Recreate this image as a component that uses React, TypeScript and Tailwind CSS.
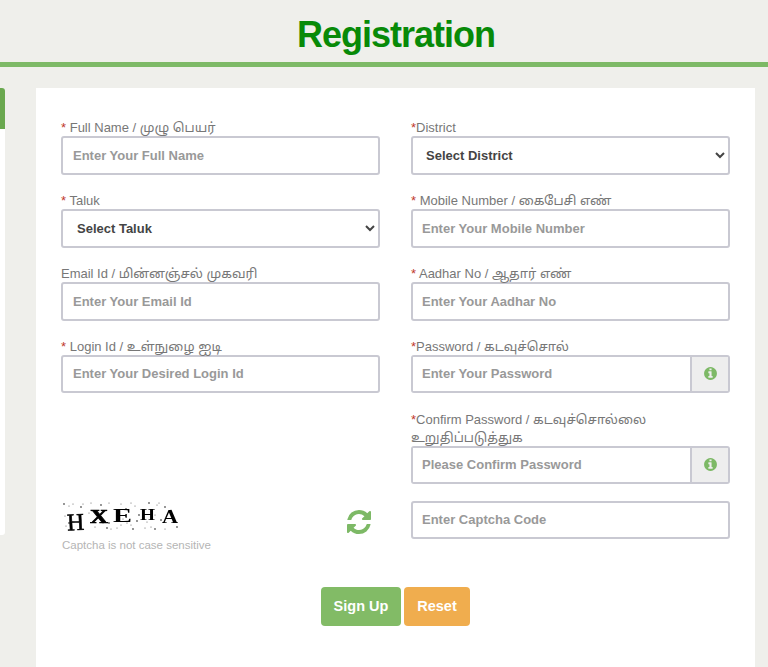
const font = "font-['Liberation_Sans','Noto_Sans_Tamil','Noto_Sans',sans-serif]";

function Label({ star, lead, children }: { star?: boolean; lead?: boolean; children: React.ReactNode }) {
  return (
    <label className="-mb-[1px] block pt-[1px] text-[13px] leading-[18px] text-[#777777]">
      {star && <span className="text-[#c0392b]">*</span>}
      {lead && " "}
      {children}
    </label>
  );
}

function Input({ placeholder, right, short }: { placeholder: string; right?: boolean; short?: boolean }) {
  return (
    <input
      placeholder={placeholder}
      className={`block ${short ? "h-[38px]" : "h-[39px]"} w-full rounded-[3px] border-2 border-[#c9c9d2] bg-white ${right ? "px-[9px]" : "px-[10px]"} pb-[1px] text-[13px] font-bold text-[#555] outline-none placeholder:text-[#999]`}
    />
  );
}

function Select({ label, right }: { label: string; right?: boolean }) {
  return (
    <select
      className={`block h-[39px] w-full rounded-[3px] border-2 border-[#c9c9d2] bg-white ${right ? "px-[9px]" : "px-[10px]"} text-[13px] font-bold text-[#444] outline-none`}
    >
      <option>{label}</option>
    </select>
  );
}

function InfoIcon() {
  return (
    <svg viewBox="0 0 1792 1792" className="h-[15px] w-[15px]" fill="#7db966">
      <path d="M1152 1376v-160q0-14-9-23t-23-9h-96v-512q0-14-9-23t-23-9h-320q-14 0-23 9t-9 23v160q0 14 9 23t23 9h96v320h-96q-14 0-23 9t-9 23v160q0 14 9 23t23 9h448q14 0 23-9t9-23zm-128-896v-160q0-14-9-23t-23-9h-192q-14 0-23 9t-9 23v160q0 14 9 23t23 9h192q14 0 23-9t9-23zm640 416q0 209-103 385.500t-279.500 279.500-385.500 103-385.500-103-279.500-279.500-103-385.500 103-385.500 279.500-279.500 385.500-103 385.500 103 279.500 279.500 103 385.500z" />
    </svg>
  );
}

function RefreshIcon() {
  return (
    <svg viewBox="0 0 1792 1792" className="mr-[7px] mt-[7px] h-[28px] w-[28px]" fill="#7db966">
      <path d="M1639 1056q0 5-1 7-64 268-268 434.500t-478 166.500q-146 0-282.500-55t-243.500-157l-129 129q-19 19-45 19t-45-19-19-45v-448q0-26 19-45t45-19h448q26 0 45 19t19 45-19 45l-137 137q71 66 161 102t187 36q134 0 250-65t186-179q11-17 53-117 8-23 30-23h192q13 0 22.500 9.500t9.500 22.500zm25-800v448q0 26-19 45t-45 19h-448q-26 0-45-19t-19-45 19-45l138-138q-148-137-349-137-134 0-250 65t-186 179q-11 17-53 117-8 23-30 23h-199q-13 0-22.500-9.500t-9.500-22.500v-7q65-268 270-434.500t480-166.500q146 0 284 55.500t245 156.500l130-129q19-19 45-19t45 19 19 45z" />
    </svg>
  );
}

function PasswordInput({ placeholder }: { placeholder: string }) {
  return (
    <div className="flex h-[38px] w-full rounded-[3px] border-2 border-[#c9c9d2]">
      <input
        placeholder={placeholder}
        className="min-w-0 flex-1 bg-white px-[9px] pb-[1px] text-[13px] font-bold text-[#555] outline-none placeholder:text-[#999]"
      />
      <div className="flex w-[38px] items-center justify-center border-l-2 border-[#c9c9d2] bg-[#eeeeee] pb-[2px]">
        <InfoIcon />
      </div>
    </div>
  );
}

function CaptchaImage() {
  const dots = [
    [3, 3], [8, 5], [12, 3], [20, 6], [22, 3], [30, 2], [40, 4], [48, 2], [60, 3], [65, 8], [70, 2], [74, 5], [88, 2], [96, 4], [98, 2], [104, 6],
    [110, 9], [114, 20], [8, 22], [4, 15], [5, 25], [48, 22], [62, 18], [70, 24], [72, 28], [84, 27], [90, 26], [94, 28], [104, 28], [50, 28],
    [46, 27], [38, 17], [28, 12], [78, 14], [94, 14], [66, 22], [116, 26], [56, 27], [60, 24], [76, 20], [42, 22], [34, 26], [100, 19], [86, 21],
  ];
  return (
    <svg viewBox="0 0 122 32" className="block h-[32px] w-[122px] overflow-visible blur-[0.4px]">
      {dots.map(([x, y], i) => (
        <circle key={i} cx={x} cy={y} r={i % 3 === 0 ? 0.9 : 0.6} fill="#333" opacity={0.75} />
      ))}
      <g fontFamily="'Liberation Serif', serif" fill="#000">
        <text x="6" y="29" fontSize="24" textLength="17" lengthAdjust="spacingAndGlyphs" transform="rotate(-3 14 22)" stroke="#000" strokeWidth="0.6">H</text>
        <text x="29" y="22" fontSize="19" fontWeight="bold" textLength="18" lengthAdjust="spacingAndGlyphs" stroke="#000" strokeWidth="0.7">X</text>
        <text x="52" y="21" fontSize="18" fontWeight="bold" textLength="19" lengthAdjust="spacingAndGlyphs">E</text>
        <text x="79" y="19" fontSize="16" fontWeight="bold" textLength="15" lengthAdjust="spacingAndGlyphs">H</text>
        <text x="101" y="22" fontSize="18" fontWeight="bold" textLength="16" lengthAdjust="spacingAndGlyphs">A</text>
      </g>
    </svg>
  );
}

export default function App() {
  return (
    <div className={`${font} h-[667px] w-full overflow-hidden bg-[#efefeb]`}>
      <header className="h-[67px] border-b-[5px] border-[#7db966] pt-[14px] text-center">
        <h1 className="ml-[24px] text-[36px] font-bold leading-[41px] tracking-[-1px] text-[#088a08]">Registration</h1>
      </header>

      <div className="flex items-start pt-[21px]">
        <aside className="h-[447px] w-[5px] rounded-r-[3px] bg-white">
          <div className="h-[41px] rounded-tr-[3px] bg-[#6aa84f]" />
        </aside>

        <main className="ml-[31px] h-[600px] w-[719px] bg-white px-[25px] pt-[30px]">
          <div className="grid grid-cols-[319px_319px] gap-x-[31px]">
            <div className="mb-[16px]">
              <Label star lead>Full Name / முழு பெயர்</Label>
              <Input placeholder="Enter Your Full Name" />
            </div>
            <div className="mb-[16px]">
              <Label star>District</Label>
              <Select right label="Select District" />
            </div>

            <div className="mb-[16px]">
              <Label star lead>Taluk</Label>
              <Select label="Select Taluk" />
            </div>
            <div className="mb-[16px]">
              <Label star lead>Mobile Number / கைபேசி எண்</Label>
              <Input right placeholder="Enter Your Mobile Number" />
            </div>

            <div className="mb-[16px]">
              <Label>Email Id / மின்னஞ்சல் முகவரி</Label>
              <Input placeholder="Enter Your Email Id" />
            </div>
            <div className="mb-[16px]">
              <Label star lead>Aadhar No / ஆதார் எண்</Label>
              <Input right placeholder="Enter Your Aadhar No" />
            </div>

            <div className="mb-[17px]">
              <Label star lead>Login Id / உள்நுழை ஐடி</Label>
              <Input short placeholder="Enter Your Desired Login Id" />
            </div>
            <div className="mb-[17px]">
              <Label star>Password / கடவுச்சொல்</Label>
              <PasswordInput placeholder="Enter Your Password" />
            </div>

            <div />
            <div className="mb-[17px]">
              <Label star>Confirm Password / கடவுச்சொல்லை உறுதிப்படுத்துக</Label>
              <PasswordInput placeholder="Please Confirm Password" />
            </div>

            <div className="flex items-start justify-between">
              <div>
                <CaptchaImage />
                <p className="mt-[4px] pl-[1px] text-[11.5px] leading-[16px] text-[#b5b5b5]">Captcha is not case sensitive</p>
              </div>
              <RefreshIcon />
            </div>
            <div>
              <Input right short placeholder="Enter Captcha Code" />
            </div>
          </div>

          <div className="mt-[34px] flex justify-center gap-[3px]">
            <button className="h-[39px] w-[80px] rounded-[4px] bg-[#82bb66] text-[14.5px] font-bold text-white">Sign Up</button>
            <button className="h-[39px] w-[66px] rounded-[4px] bg-[#f0ad4e] text-[14.5px] font-bold text-white">Reset</button>
          </div>
        </main>
      </div>
    </div>
  );
}
